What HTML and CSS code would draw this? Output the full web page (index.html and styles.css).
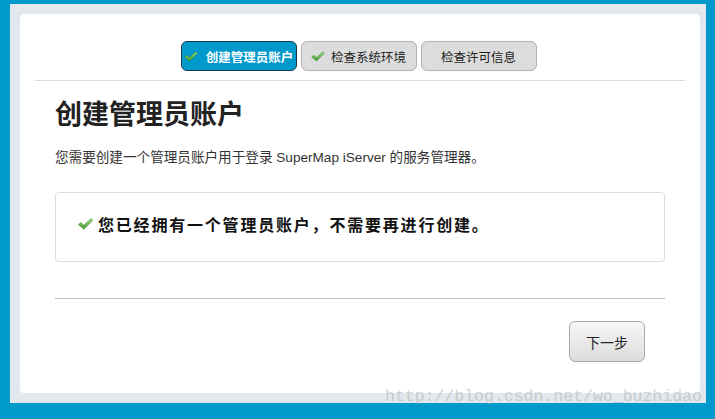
FILE: index.html
```html
<!DOCTYPE html>
<html lang="zh-CN">
<head>
<meta charset="utf-8">
<link rel="stylesheet" href="styles.css">
</head>
<body>
<div class="frame">
  <div class="card">
    <div class="steps">
      <div class="step active"><svg class="chk sm" viewBox="0 0 16 12"><defs><linearGradient id="g1" x1="0" y1="0" x2="0" y2="1"><stop offset="0" stop-color="#9be07f"/><stop offset="1" stop-color="#3f9a30"/></linearGradient></defs><path d="M0.8 6.6 L3.4 4.6 L6.2 7.2 L13.6 0.6 L15.4 2.3 L6.3 11.2 Z" fill="url(#g1)" stroke="#3a7d2c" stroke-width="0.5"/></svg><span>创建管理员账户</span></div>
      <div class="step done"><svg class="chk sm" viewBox="0 0 16 12"><path d="M0.8 6.6 L3.4 4.6 L6.2 7.2 L13.6 0.6 L15.4 2.3 L6.3 11.2 Z" fill="url(#g1)" stroke="#3a7d2c" stroke-width="0.5"/></svg><span>检查系统环境</span></div>
      <div class="step"><span>检查许可信息</span></div>
    </div>
    <div class="divider"></div>
    <div class="content">
      <h1 class="title">创建管理员账户</h1>
      <p class="desc">您需要创建一个管理员账户用于登录 SuperMap iServer 的服务管理器。</p>
      <div class="msg"><svg class="chk lg" viewBox="0 0 16 12"><path d="M0.8 6.6 L3.4 4.6 L6.2 7.2 L13.6 0.6 L15.4 2.3 L6.3 11.2 Z" fill="url(#g1)" stroke="#3a7d2c" stroke-width="0.5"/></svg><span>您已经拥有一个管理员账户，不需要再进行创建。</span></div>
      <div class="rule"></div>
      <div class="actions"><button class="next">下一步</button></div>
    </div>
  </div>
</div>
<div class="watermark">http://blog.csdn.net/wo_buzhidao</div>
</body>
</html>
```
FILE: styles.css
```css
html, body {
  margin: 0;
  padding: 0;
}
body {
  width: 715px;
  height: 419px;
  background: #0099cc;
  font-family: "Noto Sans CJK SC", "Liberation Sans", sans-serif;
  position: relative;
  overflow: hidden;
}
.frame {
  margin: 4px 9px 0 10px;
  height: 399px;
  box-sizing: border-box;
  background: #e3e8ee;
  padding: 10px 6px 10px 10px;
}
.card {
  background: #fff;
  border-radius: 4px;
  height: 379px;
  box-sizing: border-box;
  padding: 27px 15px 0 15px;
}
.steps {
  display: flex;
  justify-content: center;
  gap: 4px;
  padding-right: 3px;
}
.step {
  width: 116px;
  height: 30px;
  box-sizing: border-box;
  border: 1px solid #b3b3b3;
  background: #dcdcdc;
  border-radius: 6px;
  display: flex;
  align-items: center;
  justify-content: center;
  gap: 6px;
  font-size: 12.5px;
  color: #222;
}
.step.active {
  background: #0099cc;
  border-color: #16394a;
  color: #fff;
  font-weight: bold;
  gap: 8px;
}
.chk.sm {
  width: 14px;
  height: 11px;
}
.chk.lg {
  width: 17px;
  height: 12px;
}
.divider {
  height: 1px;
  background: #dcdcdc;
  margin-top: 9px;
}
.content {
  padding: 0 20px;
}
.title {
  margin: 16px 0 0 0;
  font-size: 27px;
  line-height: 32px;
  font-weight: bold;
  color: #222;
}
.desc {
  margin: 19px 0 0 0;
  font-family: "Liberation Sans", "Noto Sans CJK SC", sans-serif;
  font-size: 13.6px;
  line-height: 20px;
  color: #333;
}
.msg {
  margin-top: 24px;
  height: 70px;
  box-sizing: border-box;
  border: 1px solid #dcdcdc;
  border-radius: 4px;
  display: flex;
  align-items: center;
  padding: 0 0 6px 21px;
  gap: 4px;
  font-size: 16px;
  font-weight: bold;
  color: #111;
  letter-spacing: 1.8px;
}
.rule {
  margin-top: 36px;
  height: 1px;
  background: #bdbdbd;
}
.actions {
  display: flex;
  justify-content: flex-end;
  padding-right: 20px;
  margin-top: 22px;
}
.next {
  width: 76px;
  height: 41px;
  border: 1px solid #a8a8a8;
  border-radius: 6px;
  background: linear-gradient(#f7f7f7, #dcdcdc);
  font-family: "Noto Sans CJK SC", sans-serif;
  font-size: 14px;
  color: #222;
  padding: 0;
}
.watermark {
  position: absolute;
  left: 385px;
  top: 387px;
  font-family: "Liberation Mono", monospace;
  font-size: 16.5px;
  line-height: 20px;
  color: rgba(170, 170, 170, 0.5);
  white-space: nowrap;
}
```
